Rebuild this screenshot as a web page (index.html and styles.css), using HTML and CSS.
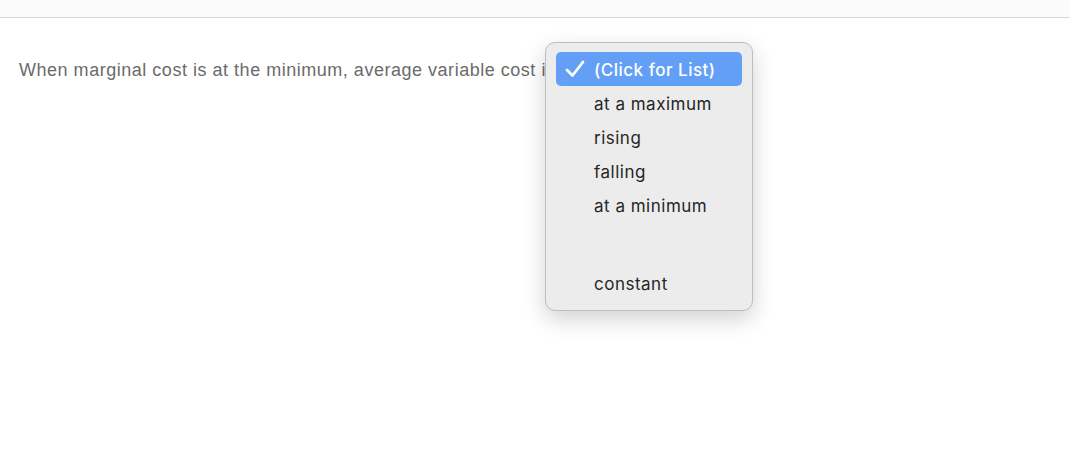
FILE: index.html
```html
<!doctype html>
<html lang="en">
    <head>
        <meta charset="utf-8">
        <title>Question</title>
        <link rel="stylesheet" href="styles.css">
    </head>
    <body>
        <div class="topbar"></div>
        <div class="question">
            <p class="question__text">When marginal cost is at the minimum, average variable cost is</p>
            <ul class="menu">
                <li class="menu__item menu__item--selected">
                    <svg class="menu__check" width="20" height="18" viewBox="0 0 20 18">
                        <path d="M2 10 L7.5 15.5 L18 2" fill="none" stroke="#fff" stroke-width="2.8" stroke-linecap="round" stroke-linejoin="round"/>
                    </svg>
                    <span>(Click for List)</span>
                </li>
                <li class="menu__item"><span>at a maximum</span></li>
                <li class="menu__item"><span>rising</span></li>
                <li class="menu__item"><span>falling</span></li>
                <li class="menu__item"><span>at a minimum</span></li>
                <li class="menu__item menu__item--empty"><span></span></li>
                <li class="menu__item"><span>constant</span></li>
            </ul>
        </div>
    </body>
</html>
```

FILE: styles.css
```css
html,
body {
    height: 100%;
}

body {
    background: #fff;
    margin: 0;
}

.topbar {
    background: #fbfbfb;
    border-bottom: 1px solid #d6d6d6;
    height: 17px;
}

.question {
    min-height: 420px;
    position: relative;
}

.question__text {
    color: #6b6b6b;
    font-family: "Liberation Sans", Arial, sans-serif;
    font-size: 18px;
    letter-spacing: 0.52px;
    margin: 0;
    padding: 42px 19px 0;
}

.menu {
    background: #ececec;
    border: 1px solid #bdbdbd;
    border-radius: 10px;
    box-shadow: 0 8px 22px rgba(0, 0, 0, 0.18);
    box-sizing: border-box;
    font-family: "Inter", "Noto Sans", sans-serif;
    height: 269px;
    left: 545px;
    list-style: none;
    margin: 0;
    padding: 9px 10px;
    position: absolute;
    top: 24px;
    width: 208px;
}

.menu__item {
    align-items: center;
    border-radius: 5px;
    color: #262626;
    display: flex;
    font-size: 17px;
    height: 34px;
    letter-spacing: 0.5px;
    padding-left: 38px;
    padding-top: 2px;
    box-sizing: border-box;
    position: relative;
}

.menu__item--selected {
    background: #639ff6;
    color: #fff;
    font-weight: 500;
}

.menu__item--empty {
    height: 44px;
}

.menu__check {
    left: 9px;
    position: absolute;
    top: 8px;
}
```
